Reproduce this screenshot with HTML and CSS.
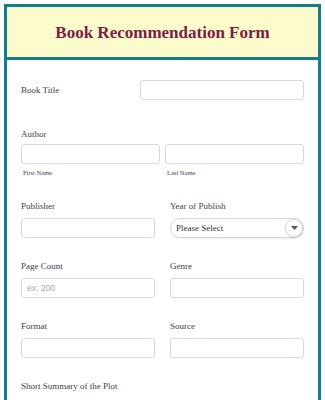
FILE: index.html
```html
<!DOCTYPE html>
<html lang='en'>
<head>
    <meta charset='UTF-8'>
    <title>Book Recommendation Form</title>

    <link rel="stylesheet" href="styles.css">
</head>
<body>

<section class='form-wrap'>
    <header class='form-header'>
        <h1>Book Recommendation Form</h1>
    </header>

    <div class='form-body'>
        <div class='row-inline'>
            <label class='label' for='title'>Book Title</label>
            <input class='input' id='title' type='text'>
        </div>

        <div class='field field-author'>
            <label class='label'>Author</label>
            <div class='name-pair'>
                <div>
                    <input class='input' type='text'>
                    <span class='sublabel'>First Name</span>
                </div>
                <div>
                    <input class='input' type='text'>
                    <span class='sublabel'>Last Name</span>
                </div>
            </div>
        </div>

        <div class='two-col first-pair'>
            <div class='field'>
                <label class='label'>Publisher</label>
                <input class='input' type='text'>
            </div>
            <div class='field'>
                <label class='label'>Year of Publish</label>
                <div class='select'>
                    <span>Please Select</span>
                    <span class='select-btn'>
                        <svg width='7' height='4' viewBox='0 0 7 4'><path d='M0 0 L7 0 L3.5 4 Z' fill='#555'/></svg>
                    </span>
                </div>
            </div>
        </div>

        <div class='two-col'>
            <div class='field'>
                <label class='label'>Page Count</label>
                <input class='input' type='text' placeholder='ex: 200'>
            </div>
            <div class='field'>
                <label class='label'>Genre</label>
                <input class='input' type='text'>
            </div>
        </div>

        <div class='two-col'>
            <div class='field'>
                <label class='label'>Format</label>
                <input class='input' type='text'>
            </div>
            <div class='field'>
                <label class='label'>Source</label>
                <input class='input' type='text'>
            </div>
        </div>

        <div class='field field-last'>
            <label class='label'>Short Summary of the Plot</label>
        </div>
    </div>
</section>

</body>
</html>
```

FILE: styles.css
```css
body {
    margin: 4px;
    background: #fff;
    font-family: "Liberation Serif", serif;
    color: #3c3d4e;
}

.form-wrap {
    border: 3px solid #157c8f;
    border-bottom: 0;
    height: 400px;
}

.form-header {
    background: #fbfbcb;
    height: 50px;
    border-bottom: 3px solid #157c8f;
    display: flex;
    align-items: center;
    justify-content: center;
}

.form-header h1 {
    margin: 0;
    font-size: 17px;
    font-weight: bold;
    color: #7b1d48;
    padding-top: 1px;
}

.form-body {
    padding: 20px 14px 0;
}

.label {
    display: block;
    font-size: 9px;
    line-height: 12px;
    margin-bottom: 6px;
}

.input {
    display: block;
    box-sizing: border-box;
    width: 100%;
    height: 20px;
    margin: 0;
    border: 1px solid #d7d9e2;
    border-radius: 3px;
    background: #fff;
    padding: 0 5px;
    font-family: "Liberation Sans", sans-serif;
    font-size: 8.5px;
}

.input::placeholder {
    color: #a3a4ad;
}

.row-inline {
    display: flex;
    align-items: center;
}

.row-inline .label {
    width: 119px;
    margin: 0;
    flex: none;
}

.field {
    margin-top: 22px;
}

.field-author {
    margin-top: 28px;
}

.field-author .label {
    margin-bottom: 4px;
}

.name-pair {
    display: grid;
    grid-template-columns: 1fr 1fr;
    column-gap: 5px;
}

.sublabel {
    display: block;
    font-size: 6.5px;
    line-height: 10px;
    margin-top: 4px;
    padding-left: 2px;
}

.two-col {
    display: grid;
    grid-template-columns: 1fr 1fr;
    column-gap: 15px;
}

.first-pair .field {
    margin-top: 22px;
}

.select {
    box-sizing: border-box;
    height: 20px;
    border: 1px solid #d3d5df;
    border-radius: 10px;
    box-shadow: 0 1px 2px rgba(0, 0, 0, 0.08);
    display: flex;
    align-items: center;
    justify-content: space-between;
    padding-left: 5px;
    font-size: 9px;
    color: #2f3040;
}

.select-btn {
    box-sizing: border-box;
    width: 18px;
    height: 18px;
    border: 1px solid #d3d5df;
    border-radius: 50%;
    box-shadow: 0 1px 2px rgba(0, 0, 0, 0.12);
    display: flex;
    align-items: center;
    justify-content: center;
}
```
